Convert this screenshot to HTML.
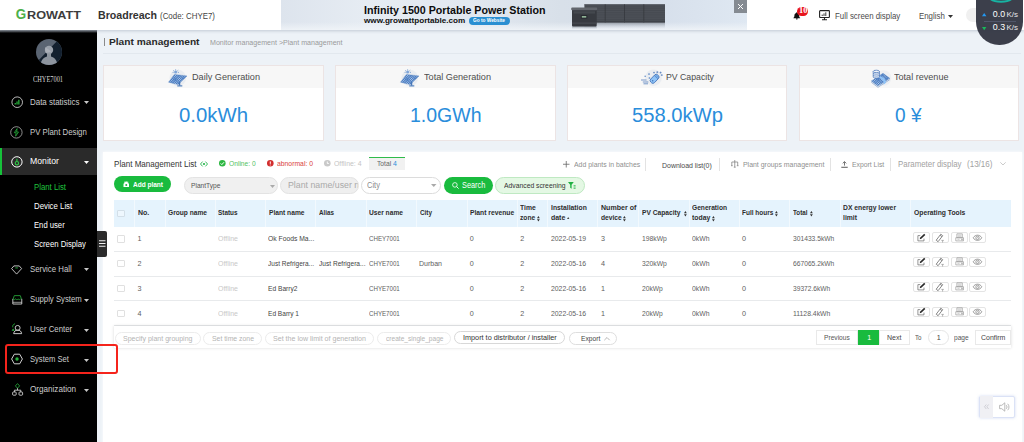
<!DOCTYPE html>
<html lang="en"><head><meta charset="utf-8"><title>Plant management</title>
<style>
html,body{margin:0;padding:0}
body{width:1024px;height:442px;overflow:hidden;position:relative;background:#fff;font-family:"Liberation Sans",sans-serif;}
#root{position:absolute;left:0;top:0;width:1024px;height:442px;overflow:hidden;background:#fff}
#root div{position:absolute;box-sizing:border-box}
#root svg{position:absolute;overflow:visible}
#root span.t{position:absolute;white-space:nowrap;transform-origin:0 50%;display:block}
#root span.s{font-family:"Liberation Sans",sans-serif}
#root span.r{font-family:"Liberation Serif",serif}
</style></head><body><div id="root">
<div style="left:97px;top:29px;width:927px;height:413px;background:#edf2f7;"></div>
<div style="left:103px;top:53px;width:918px;height:1px;background:#e2e8ee;"></div>
<div style="left:0px;top:0px;width:1024px;height:29.5px;background:#fff;box-shadow:0 1px 3px rgba(40,60,90,.22);z-index:3;"></div>
<div style="left:0px;top:29.5px;width:97.3px;height:412.5px;background:#000;z-index:2;"></div>
<div style="left:0px;top:29.5px;width:97.3px;height:3.5px;background:linear-gradient(#9aa0a6,#000);z-index:2;"></div>
<svg style="left:15px;top:6px;z-index:5" width="68" height="15" viewBox="0 0 68 15"><text x="0.800" y="12.600" font-family="Liberation Sans" font-weight="700" font-size="14.600" fill="#4cb04a" textLength="10.400" lengthAdjust="spacingAndGlyphs">G</text><text x="12" y="12.500" font-family="Liberation Sans" font-weight="700" font-size="10.400" fill="#3d3d3d" textLength="54" lengthAdjust="spacingAndGlyphs">ROWATT</text></svg>
<div style="left:281px;top:0px;width:465.5px;height:29.5px;background:linear-gradient(90deg,#dde4ed 0%,#e6ecf3 18%,#e2e8f0 40%,#d8e0e9 60%,#d5deea 78%,#dfe8f2 100%);z-index:4;"></div>
<div style="left:281px;top:22px;width:465.5px;height:7.5px;background:linear-gradient(rgba(255,255,255,0),rgba(240,244,248,.9));z-index:4;"></div>
<div style="left:468.8px;top:17px;width:40.8px;height:7.6px;background:#2a8fd2;border-radius:4px;z-index:5;"></div>
<svg style="left:570px;top:2px;z-index:5" width="100" height="28" viewBox="0 0 100 28"><defs><linearGradient id="rf" x1="0" y1="0" x2="0" y2="1"><stop offset="0" stop-color="#7d848d" stop-opacity=".75"/><stop offset="1" stop-color="#c9d1da" stop-opacity="0"/></linearGradient><pattern id="pl" width="4" height="1.800" patternUnits="userSpaceOnUse"><rect width="4" height="1.800" fill="#4c5057"/><rect y="1.300" width="4" height=".5" fill="#41454b"/></pattern></defs><rect x="14.400" y="20.500" width="80.600" height="6.500" fill="url(#rf)"/><rect x="2" y="24.400" width="24.700" height="3" fill="url(#rf)"/><rect x="14.400" y="2.300" width="80.600" height="18.200" fill="url(#pl)"/><rect x="14.400" y="2.300" width="80.600" height=".9" fill="#5d6168"/><rect x="34.800" y="2.300" width=".7" height="18.200" fill="#33363b"/><rect x="54.300" y="2.300" width=".7" height="18.200" fill="#33363b"/><rect x="73.500" y="2.300" width=".7" height="18.200" fill="#33363b"/><rect x="14.400" y="18.800" width="80.600" height="1.700" fill="#3f4349"/><rect x="2" y="6.300" width="24.700" height="18.100" rx=".8" fill="#373a40"/><rect x="1.200" y="5.600" width="26" height="2.600" rx="1" fill="#62666d"/><rect x="3.500" y="9.200" width="21.500" height="2.400" fill="#44484e"/><rect x="10.800" y="13.200" width="6.500" height="3.400" rx=".4" fill="#22252a"/><rect x="11.800" y="14.100" width="4.500" height="1.500" fill="#9ec4a4"/><rect x="2" y="20.600" width="24.700" height="1" fill="#4b4f55"/></svg>
<div style="left:734px;top:0px;width:12.5px;height:12.7px;background:#858b92;z-index:5;"></div>
<svg style="left:737px;top:3px;z-index:6" width="7" height="7" viewBox="0 0 7 7"><path d="M1 1L6 6M6 1L1 6" stroke="#fff" stroke-width="1" fill="none"/></svg>
<svg style="left:792.800px;top:12px;z-index:5" width="8" height="8" viewBox="0 0 9 9"><path d="M4.3 0.3c.5 0 .7.3.7.7 1.4.4 1.9 1.5 1.9 2.8 0 1.4.4 2 1.1 2.6v.5H.5v-.5C1.2 5.800 1.600 5.200 1.600 3.800c0-1.300.5-2.400 1.900-2.800 0-.4.300-.7.800-.7zM3.300 7.400h2c0 .6-.4 1.100-1 1.100s-1-.5-1-1.100z" fill="#111"/></svg>
<div style="left:797.3px;top:6.8px;width:10.7px;height:9.2px;background:#e8141c;border-radius:5px;z-index:6;"></div>
<svg style="left:819px;top:10px;z-index:5" width="11" height="10.5" viewBox="0 0 11 10.5"><rect x=".6" y=".6" width="9.8" height="6.9" rx=".7" fill="none" stroke="#222" stroke-width="1.1"/><path d="M3 9.800h5M5.500 7.600v2.200" stroke="#222" stroke-width="1.1"/><path d="M3.200 6v-1.400M5 6V3.400M6.800 6V2.300" stroke="#222" stroke-width=".9"/></svg>
<svg style="left:947.800px;top:14.600px;z-index:5" width="5" height="3" viewBox="0 0 5 3"><path d="M0 0h5L2.500 3z" fill="#333"/></svg>
<div style="left:966px;top:8px;width:34px;height:14.3px;background:#f0f0f0;border-radius:7px;z-index:5;"></div>
<div style="left:976.3px;top:-30px;width:46.4px;height:74.9px;background:rgba(52,55,68,.96);border-radius:23.200px;z-index:8;"></div>
<svg style="left:990px;top:0px;z-index:9" width="22" height="3" viewBox="0 0 22 3"><path d="M1 -0.500C5 2.400 17 2.400 21 -0.500" fill="none" stroke="#17b3a2" stroke-width="2"/></svg>
<div style="left:983.8px;top:21.1px;width:32.2px;height:0.5px;background:#50566a;z-index:9;"></div>
<svg style="left:982px;top:12.600px;z-index:9" width="4.400" height="3.300" viewBox="0 0 4 3"><path d="M0 3h4L2 0z" fill="#2398f2"/></svg>
<svg style="left:982px;top:27.100px;z-index:9" width="4.400" height="3.300" viewBox="0 0 4 3"><path d="M0 0h4L2 3z" fill="#17b95a"/></svg>
<svg style="left:35.800px;top:39.400px;z-index:4" width="26" height="26" viewBox="0 0 26 26"><defs><clipPath id="av"><circle cx="13" cy="13" r="13"/></clipPath></defs><g clip-path="url(#av)"><rect width="26" height="26" fill="#5a6472"/><path d="M23 0L28 0 28 28 0 28 0 24z" fill="#13202f"/><circle cx="13" cy="11" r="4.200" fill="#9aa1ab"/><path d="M4.500 27c0-5.500 3-8.500 6.500-9.500v-3h4v3c3.500 1 6.500 4 6.500 9.500z" fill="#8d949e"/><path d="M9 8l6.500 4.500L9.500 14z" fill="#b9bec5" opacity=".5"/></g></svg>
<svg style="left:84.100px;top:101.1px;z-index:4" width="5" height="3" viewBox="0 0 5 3"><path d="M0 0h5L2.500 3z" fill="#c8c8c8"/></svg>
<div style="left:0px;top:147.8px;width:97.3px;height:27.5px;background:#2a2a2a;z-index:3;"></div>
<div style="left:0px;top:147.8px;width:2px;height:27.5px;background:#16c23a;z-index:4;"></div>
<svg style="left:84.100px;top:160.8px;z-index:4" width="5" height="3" viewBox="0 0 5 3"><path d="M0 0h5L2.500 3z" fill="#fff"/></svg>
<svg style="left:84.100px;top:268.3px;z-index:4" width="5" height="3" viewBox="0 0 5 3"><path d="M0 0h5L2.500 3z" fill="#c8c8c8"/></svg>
<svg style="left:84.100px;top:298.6px;z-index:4" width="5" height="3" viewBox="0 0 5 3"><path d="M0 0h5L2.500 3z" fill="#c8c8c8"/></svg>
<svg style="left:84.100px;top:328.6px;z-index:4" width="5" height="3" viewBox="0 0 5 3"><path d="M0 0h5L2.500 3z" fill="#c8c8c8"/></svg>
<svg style="left:84.100px;top:358.6px;z-index:4" width="5" height="3" viewBox="0 0 5 3"><path d="M0 0h5L2.500 3z" fill="#c8c8c8"/></svg>
<svg style="left:84.100px;top:388.8px;z-index:4" width="5" height="3" viewBox="0 0 5 3"><path d="M0 0h5L2.500 3z" fill="#c8c8c8"/></svg>
<svg style="left:11px;top:96px;z-index:4" width="12.4" height="12.4" viewBox="0 0 12.4 12.4"><circle cx="6.200" cy="6.200" r="5.300" fill="none" stroke="#e6e6e6" stroke-width=".8"/><path d="M3.600 8.600h1.300v-1.600h-1.300zM5.400 8.600h1.300V5.500h-1.300zM7.200 8.600h1.300V3.800h-1.300z" fill="#27b13c"/></svg>
<svg style="left:10.4px;top:125.8px;z-index:4" width="12.8" height="12.8" viewBox="0 0 12.8 12.8"><circle cx="6.400" cy="6.400" r="5.700" fill="none" stroke="#c8c8c8" stroke-width=".7"/><path d="M7.100 2.600L4.300 6.700h1.900L5.600 10.200 8.500 6h-1.900z" fill="none" stroke="#27b13c" stroke-width=".8" stroke-linejoin="round"/></svg>
<svg style="left:11.3px;top:156.3px;z-index:4" width="11.8" height="11.8" viewBox="0 0 11.8 11.8"><circle cx="5.900" cy="5.900" r="5.200" fill="none" stroke="#fff" stroke-width="1"/><circle cx="5.900" cy="7.200" r="1.700" fill="none" stroke="#2fc045" stroke-width="1.200"/><path d="M5.900 5.500V2.800" stroke="#2fc045" stroke-width="1.200"/></svg>
<svg style="left:11.3px;top:264.6px;z-index:4" width="11.2" height="10" viewBox="0 0 12 11"><path d="M3 1h6l2.500 3L6 10 .5 4z" fill="none" stroke="#e6e6e6" stroke-width=".9" stroke-linejoin="round"/><path d="M4.600 3.200h2.800" stroke="#27b13c" stroke-width="1"/></svg>
<svg style="left:11.7px;top:295px;z-index:4" width="10.6" height="9.6" viewBox="0 0 11 10.500"><path d="M.6 4.200V9.900h9.800V4.200" fill="none" stroke="#e6e6e6" stroke-width=".9"/><path d="M.6 8h9.800" stroke="#e6e6e6" stroke-width=".7"/><path d="M1 4.300L2.200.7h6.600L10 4.300M1 4.300c.8 1 1.800 1 2.600 0 .8 1 2 1 2.800 0 .8 1 2 1 2.800 0" fill="none" stroke="#27b13c" stroke-width=".9" stroke-linejoin="round"/></svg>
<svg style="left:11.3px;top:323px;z-index:4" width="11.4" height="11.4" viewBox="0 0 12 12"><circle cx="7" cy="5.200" r="2.600" fill="none" stroke="#e6e6e6" stroke-width=".9"/><path d="M2.800 11.200c.3-2.600 2-3.700 4.200-3.700s3.900 1.100 4.200 3.700z" fill="none" stroke="#e6e6e6" stroke-width=".9" stroke-linejoin="round"/><path d="M4.200.8C2.400 1.200 1.400 2.800 1.900 4.600M1.200 7.800l1.200-1.600.8 1.600z" fill="none" stroke="#27b13c" stroke-width=".9"/></svg>
<svg style="left:11px;top:353.4px;z-index:4" width="12" height="12" viewBox="0 0 12 12"><path d="M3.300 1.200h5.400L11.400 6 8.700 10.800H3.300L.6 6z" fill="none" stroke="#e6e6e6" stroke-width=".9" stroke-linejoin="round"/><circle cx="6" cy="6" r="1.700" fill="#27b13c"/></svg>
<svg style="left:11.5px;top:383px;z-index:4" width="12" height="13" viewBox="0 0 12 13"><path d="M5.500.6L7.600 2.900 5.500 5.200 3.400 2.900z" fill="none" stroke="#27b13c" stroke-width=".8"/><path d="M5.500 5.200v2M2.400 9V7.200h6.400V9" fill="none" stroke="#e6e6e6" stroke-width=".8"/><rect x=".6" y="9" width="3.600" height="3.200" rx=".8" fill="none" stroke="#e6e6e6" stroke-width=".8"/><rect x="7" y="9" width="3.600" height="3.200" rx=".8" fill="none" stroke="#e6e6e6" stroke-width=".8"/></svg>
<div style="left:97px;top:230.5px;width:9.8px;height:26px;background:#2b2b2b;border-radius:0 2px 2px 0;z-index:6;"></div>
<svg style="left:99.300px;top:240.300px;z-index:7" width="6.500" height="7" viewBox="0 0 6.500 7"><path d="M0 .8h6.500M0 3.500h6.500M0 6.200h6.500" stroke="#f0f0f0" stroke-width="1.100"/></svg>
<div style="left:4.5px;top:344.3px;width:113.2px;height:29.6px;border:2px solid #f5241c;border-radius:3px;z-index:9;"></div>
<div style="left:104.4px;top:38.3px;width:0.8px;height:8px;background:#8a8a8a;"></div>
<svg width="0" height="0" style="left:0;top:0"><defs><pattern id="ht" width="1.600" height="1.600" patternUnits="userSpaceOnUse" patternTransform="rotate(38)"><rect width="1.600" height="1.600" fill="#4b7dc2"/><rect x="0" y="0" width=".75" height=".75" fill="#cfe0f5"/></pattern></defs></svg>
<div style="left:103.3px;top:65px;width:220.3px;height:76px;background:#fff;border:1px solid #ece4e4;"></div>
<div style="left:104.3px;top:66px;width:218.3px;height:22px;background:#f7f7f7;"></div>
<svg style="left:168px;top:68.500px" width="20" height="18" viewBox="0 0 20 18"><circle cx="9.800" cy="9" r="8.300" fill="#e6e9ef" opacity=".75"/><path d="M.5 13.200L6.300 5.500 19 6.900 10.200 15.600z" fill="url(#ht)"/><path d="M.5 13.200L6.300 5.500 19 6.900 10.200 15.600z" fill="none" stroke="#4576b8" stroke-width=".5" opacity=".7"/><circle cx="7.600" cy="3" r="1.500" fill="#7fa5d8"/><path d="M7.600 .3v1M5 1.200l.8.700M10.200 1.200l-.8.700M4.600 3.400h1M9.800 3.400h1.200" stroke="#4b7dc2" stroke-width=".6"/><path d="M11.600 13v3.600" stroke="#4576b8" stroke-width="1.300"/><path d="M9.300 16.900h5" stroke="#4576b8" stroke-width="1.100"/></svg>
<div style="left:335.3px;top:65px;width:220.4px;height:76px;background:#fff;border:1px solid #ece4e4;"></div>
<div style="left:336.3px;top:66px;width:218.4px;height:22px;background:#f7f7f7;"></div>
<svg style="left:400px;top:68.500px" width="20" height="18" viewBox="0 0 20 18"><circle cx="9.800" cy="9" r="8.300" fill="#e6e9ef" opacity=".75"/><path d="M.5 13.200L6.300 5.500 19 6.900 10.200 15.600z" fill="url(#ht)"/><path d="M.5 13.200L6.300 5.500 19 6.900 10.200 15.600z" fill="none" stroke="#4576b8" stroke-width=".5" opacity=".7"/><circle cx="7.600" cy="3" r="1.500" fill="#7fa5d8"/><path d="M7.600 .3v1M5 1.200l.8.700M10.200 1.200l-.8.700M4.600 3.400h1M9.800 3.400h1.200" stroke="#4b7dc2" stroke-width=".6"/><path d="M11.600 13v3.600" stroke="#4576b8" stroke-width="1.300"/><path d="M9.300 16.900h5" stroke="#4576b8" stroke-width="1.100"/></svg>
<div style="left:567.3px;top:65px;width:220.2px;height:76px;background:#fff;border:1px solid #ece4e4;"></div>
<div style="left:568.3px;top:66px;width:218.2px;height:22px;background:#f7f7f7;"></div>
<svg style="left:641px;top:68.500px" width="22" height="18" viewBox="0 0 22 18"><circle cx="12.500" cy="8.700" r="8.300" fill="#e6e9ef" opacity=".75"/><g transform="rotate(-46 13.600 9.800)"><rect x="8.600" y="7.200" width="10" height="5.200" rx="2.200" fill="#8fc4f8" stroke="#3f6fb5" stroke-width=".8"/><path d="M15.800 7.400v4.800M17 7.600v4.400" stroke="#3f6fb5" stroke-width=".6"/><circle cx="10.900" cy="9.800" r=".7" fill="#3f6fb5"/></g><path d="M16.300 2.200v2M15.300 3.200h2M19.600 2.600v2M18.600 3.600h2M20.800 5.200v1.800M19.900 6.100h1.800M13 2.800v1.600M12.200 3.600h1.600" stroke="#3f6fb5" stroke-width=".6"/><path d="M0 11h5.500M1.800 13h5.500M2.500 14.800h4.500" stroke="#3f6fb5" stroke-width=".7"/><path d="M4.200 6.600v1.400M3.500 7.300h1.400M8 4.200v1.800M7.100 5.100h1.800M8.400 8.200v1.600M7.600 9h1.600" stroke="#4b7dc2" stroke-width=".6"/></svg>
<div style="left:799px;top:65px;width:220.3px;height:76px;background:#fff;border:1px solid #ece4e4;"></div>
<div style="left:800px;top:66px;width:218.3px;height:22px;background:#f7f7f7;"></div>
<svg style="left:871px;top:68.500px" width="20" height="18" viewBox="0 0 20 18"><circle cx="12.500" cy="9" r="7.800" fill="#e6e9ef" opacity=".6"/><path d="M.3 12L12 4.300l6.800 5-11.800 7.700z" fill="url(#ht)"/><path d="M.3 12L12 4.300l6.800 5-11.800 7.700z" fill="none" stroke="#4576b8" stroke-width=".5" opacity=".7"/><path d="M.3 13.300l6.700 5 11.800-7.700" fill="none" stroke="#4576b8" stroke-width=".6" opacity=".8"/><path d="M5.600 8.300c2.500 0 5.600 1.400 7.100 4.600v2.500l2-1.400v-2.300C13.200 8.500 10 7 7.500 7z" fill="#8fc4f8"/><path d="M2.200 2.400v5.800c.6 1.200 5.600 1.200 6.200 0V2.400" fill="#e9eff8" stroke="#3f6fb5" stroke-width=".7"/><ellipse cx="5.300" cy="2.400" rx="3.100" ry="1.200" fill="#f2f6fb" stroke="#3f6fb5" stroke-width=".7"/><path d="M2.200 4.300c.6 1.200 5.600 1.200 6.200 0M2.200 6.200c.6 1.200 5.600 1.200 6.200 0" fill="none" stroke="#3f6fb5" stroke-width=".6"/></svg>
<div style="left:103px;top:152.2px;width:918.5px;height:297.8px;background:#fff;box-shadow:0 0 3px rgba(255,255,255,.9);"></div>
<svg style="left:199.500px;top:160.600px" width="8" height="6" viewBox="0 0 8 6"><path d="M2.600.6L.5 3l2.100 2.400M5.400.6L7.500 3 5.400 5.400" fill="none" stroke="#23b24a" stroke-width=".9"/><circle cx="4" cy="3" r="1.100" fill="#23b24a"/></svg>
<svg style="left:218.800px;top:160.300px" width="6.600" height="6.600" viewBox="0 0 10 10"><circle cx="5" cy="5" r="5" fill="#2db742"/><path d="M2.500 5.200l1.800 1.800 3.300-3.600" fill="none" stroke="#fff" stroke-width="1.500"/></svg>
<svg style="left:266.800px;top:160.300px" width="6.600" height="6.600" viewBox="0 0 10 10"><circle cx="5" cy="5" r="5" fill="#d22e2e"/><path d="M5 2.200v3.600M5 7v1.200" stroke="#fff" stroke-width="1.500"/></svg>
<svg style="left:324px;top:160.300px" width="6.600" height="6.600" viewBox="0 0 10 10"><circle cx="5" cy="5" r="5" fill="#c9c9c9"/><path d="M5 2.300V5.300h2.300" fill="none" stroke="#fff" stroke-width="1.400"/></svg>
<div style="left:368.5px;top:156.8px;width:36.3px;height:13.2px;background:#f1f1f1;border-top:1px solid #2fbb4a;"></div>
<svg style="left:563px;top:161px" width="6.500" height="6.500" viewBox="0 0 6.500 6.500"><path d="M3.250 0v6.500M0 3.250h6.500" stroke="#666" stroke-width=".8"/></svg>
<div style="left:645px;top:157.5px;width:0.6px;height:13.5px;background:#e3e3e3;"></div>
<div style="left:719.3px;top:157.5px;width:0.6px;height:13.5px;background:#e3e3e3;"></div>
<svg style="left:731px;top:160.300px" width="7.500" height="7.500" viewBox="0 0 7.500 7.500"><path d="M3.750 0v7.200M.8 2h5.900M.8 2v3.600M6.700 2v3.600M0 5.700h1.700M5.800 5.700h1.700M2.800 7.200h1.900" fill="none" stroke="#777" stroke-width=".7"/></svg>
<div style="left:829.6px;top:157.5px;width:0.6px;height:13.5px;background:#e3e3e3;"></div>
<svg style="left:841px;top:160.800px" width="7" height="7" viewBox="0 0 7 7"><path d="M3.500 4.600V.7M1.700 2.400L3.500.6l1.800 1.800" fill="none" stroke="#666" stroke-width=".9"/><path d="M.3 6.300h6.400" stroke="#666" stroke-width="1.100"/></svg>
<div style="left:889.8px;top:157.5px;width:0.6px;height:13.5px;background:#e3e3e3;"></div>
<svg style="left:1000px;top:162px" width="6" height="3.500" viewBox="0 0 6 3.500"><path d="M.3.300L3 3l2.700-2.700" fill="none" stroke="#b5b5b5" stroke-width=".7"/></svg>
<div style="left:113.9px;top:176.4px;width:57.6px;height:15.9px;background:#19bb3e;border-radius:9px;"></div>
<svg style="left:122.800px;top:181.300px" width="6.500" height="6.500" viewBox="0 0 6.500 6.500"><path d="M.5 2.800L3.250.5 6 2.800V6H.5z" fill="#fff"/><circle cx="3.250" cy="3.900" r="1" fill="#19bb3e"/><path d="M1.200 1.200h4.100" stroke="#fff" stroke-width="1"/></svg>
<div style="left:183.5px;top:177px;width:94.7px;height:17px;background:#f0f0f0;border:1px solid #e3e3e3;border-radius:9px;"></div>
<svg style="left:269.500px;top:184.600px" width="5" height="3" viewBox="0 0 5 3"><path d="M0 0h5L2.500 3z" fill="#aaa"/></svg>
<div style="left:280.2px;top:177px;width:78.6px;height:16.6px;background:#efefef;border:1px solid #e3e3e3;border-radius:9px;overflow:hidden;"></div>
<div style="left:360.5px;top:177px;width:80.9px;height:16.7px;background:#fff;border:1px solid #dcdcdc;border-radius:9px;"></div>
<svg style="left:430.500px;top:184.300px" width="5.500" height="3" viewBox="0 0 5.500 3"><path d="M0 0h5.500L2.750 3z" fill="#aaa"/></svg>
<div style="left:444px;top:177px;width:48.9px;height:17px;background:#19bb3e;border-radius:9px;"></div>
<svg style="left:452px;top:181.800px" width="7" height="7" viewBox="0 0 7 7"><circle cx="2.900" cy="2.900" r="2.300" fill="none" stroke="#fff" stroke-width=".8"/><path d="M4.600 4.600l2 2" stroke="#fff" stroke-width=".9"/></svg>
<div style="left:494.7px;top:176.6px;width:90px;height:17.4px;background:#e4f8e4;border:1px solid #bfe9c2;border-radius:9px;"></div>
<svg style="left:568.200px;top:182px" width="8" height="7" viewBox="0 0 8 7"><path d="M0 0h5.800L3.600 2.800V6.800L2.200 5.800V2.800z" fill="#1fb142"/><path d="M5.600 3.600h2M5.600 5h2M5.600 6.400h2" stroke="#1fb142" stroke-width=".7"/></svg>
<div style="left:114px;top:200px;width:897px;height:26.7px;background:#e5f3fd;"></div>
<div style="left:134px;top:200px;width:0.6px;height:26.7px;background:#f2f9fe;"></div>
<div style="left:164.5px;top:200px;width:0.6px;height:26.7px;background:#f2f9fe;"></div>
<div style="left:214.7px;top:200px;width:0.6px;height:26.7px;background:#f2f9fe;"></div>
<div style="left:265.2px;top:200px;width:0.6px;height:26.7px;background:#f2f9fe;"></div>
<div style="left:315.2px;top:200px;width:0.6px;height:26.7px;background:#f2f9fe;"></div>
<div style="left:365.7px;top:200px;width:0.6px;height:26.7px;background:#f2f9fe;"></div>
<div style="left:416.2px;top:200px;width:0.6px;height:26.7px;background:#f2f9fe;"></div>
<div style="left:466.5px;top:200px;width:0.6px;height:26.7px;background:#f2f9fe;"></div>
<div style="left:517.2px;top:200px;width:0.6px;height:26.7px;background:#f2f9fe;"></div>
<div style="left:547.2px;top:200px;width:0.6px;height:26.7px;background:#f2f9fe;"></div>
<div style="left:597.2px;top:200px;width:0.6px;height:26.7px;background:#f2f9fe;"></div>
<div style="left:638.2px;top:200px;width:0.6px;height:26.7px;background:#f2f9fe;"></div>
<div style="left:688.5px;top:200px;width:0.6px;height:26.7px;background:#f2f9fe;"></div>
<div style="left:738.7px;top:200px;width:0.6px;height:26.7px;background:#f2f9fe;"></div>
<div style="left:789.3px;top:200px;width:0.6px;height:26.7px;background:#f2f9fe;"></div>
<div style="left:839.5px;top:200px;width:0.6px;height:26.7px;background:#f2f9fe;"></div>
<div style="left:910.2px;top:200px;width:0.6px;height:26.7px;background:#f2f9fe;"></div>
<div style="left:114px;top:250.6px;width:897px;height:0.8px;background:#e8eaec;"></div>
<div style="left:114px;top:275.6px;width:897px;height:0.8px;background:#e8eaec;"></div>
<div style="left:114px;top:300.4px;width:897px;height:0.8px;background:#e8eaec;"></div>
<div style="left:114px;top:325.1px;width:897px;height:0.8px;background:#e8eaec;"></div>
<div style="left:117px;top:209.9px;width:7.6px;height:7.6px;background:#eef7fe;border:1px solid #d3dfe8;border-radius:1px;"></div>
<svg style="left:537.1px;top:215.8px" width="2.800" height="5.400" viewBox="0 0 2.400 4.600"><path d="M0 1.900h2.400L1.200 0zM0 2.700h2.400L1.200 4.600z" fill="#333"/></svg>
<svg style="left:566.6px;top:216.7px" width="2.400" height="2.200" viewBox="0 0 2.400 2.200"><path d="M0 2h2.400L1.200 0z" fill="#444"/></svg>
<svg style="left:623.3px;top:215.8px" width="2.800" height="5.400" viewBox="0 0 2.400 4.600"><path d="M0 1.900h2.400L1.200 0zM0 2.700h2.400L1.200 4.600z" fill="#333"/></svg>
<svg style="left:683.6px;top:210.5px" width="2.800" height="5.400" viewBox="0 0 2.400 4.600"><path d="M0 1.900h2.400L1.200 0zM0 2.700h2.400L1.200 4.600z" fill="#333"/></svg>
<svg style="left:711.6px;top:215.8px" width="2.800" height="5.400" viewBox="0 0 2.400 4.600"><path d="M0 1.900h2.400L1.200 0zM0 2.700h2.400L1.200 4.600z" fill="#333"/></svg>
<svg style="left:775.3px;top:210.5px" width="2.800" height="5.400" viewBox="0 0 2.400 4.600"><path d="M0 1.900h2.400L1.200 0zM0 2.700h2.400L1.200 4.600z" fill="#333"/></svg>
<svg style="left:809.6px;top:210.5px" width="2.800" height="5.400" viewBox="0 0 2.400 4.600"><path d="M0 1.900h2.400L1.200 0zM0 2.700h2.400L1.200 4.600z" fill="#333"/></svg>
<div style="left:117px;top:235.3px;width:7.6px;height:7.6px;background:#fff;border:1px solid #e0e0e0;border-radius:1px;"></div>
<div style="left:913.3px;top:232.3px;width:16.9px;height:10.3px;background:#fff;border:1px solid #e4e4e4;border-radius:2px;"></div>
<svg style="left:913.3px;top:231.7px" width="16.800" height="12" viewBox="0 0 16.800 12"><path d="M7.300 3.600H4.900v5.300h6.100V6.600" fill="none" stroke="#666" stroke-width=".7"/><path d="M6.700 7.200l.5-1.700 4-3.700 1.100 1.200-4 3.700z" fill="#2a2a2a"/></svg>
<div style="left:932px;top:232.3px;width:16.9px;height:10.3px;background:#fff;border:1px solid #e4e4e4;border-radius:2px;"></div>
<svg style="left:932px;top:231.7px" width="16.800" height="12" viewBox="0 0 16.800 12"><path d="M4.200 8.200l4.600-6 1.900 1.500-4.600 6z" fill="none" stroke="#555" stroke-width=".7"/><path d="M8 3.200l1.900 1.500" stroke="#555" stroke-width=".6"/><path d="M9.300 8.400h2.600M10.600 8.400v2.200" stroke="#999" stroke-width=".7"/></svg>
<div style="left:950.7px;top:232.3px;width:16.9px;height:10.3px;background:#fff;border:1px solid #e4e4e4;border-radius:2px;"></div>
<svg style="left:950.7px;top:231.7px" width="16.800" height="12" viewBox="0 0 16.800 12"><path d="M5.900 1.800h5.400v3.900H5.900z" fill="none" stroke="#999" stroke-width=".7"/><path d="M4.800 5.700h7.700v3.200H4.800z" fill="none" stroke="#999" stroke-width=".7"/><path d="M6.800 3.100h3.600M6.800 4.300h3.600M6.400 7.300h2.200" stroke="#aaa" stroke-width=".6"/><path d="M10.300 7.300h1.400M11 6.600v1.900" stroke="#888" stroke-width=".6"/></svg>
<div style="left:969.4px;top:232.3px;width:16.9px;height:10.3px;background:#fff;border:1px solid #e4e4e4;border-radius:2px;"></div>
<svg style="left:969.4px;top:231.7px" width="16.800" height="12" viewBox="0 0 16.800 12"><path d="M4.200 5.800c1.900-3.500 6.700-3.500 8.600 0-1.900 3.500-6.700 3.500-8.600 0z" fill="none" stroke="#7a7a7a" stroke-width=".7"/><circle cx="8.500" cy="5.800" r="1.700" fill="none" stroke="#7a7a7a" stroke-width=".7"/><path d="M8.500 5v.9h.8" fill="none" stroke="#888" stroke-width=".5"/></svg>
<div style="left:117px;top:259.9px;width:7.6px;height:7.6px;background:#fff;border:1px solid #e0e0e0;border-radius:1px;"></div>
<div style="left:913.3px;top:256.9px;width:16.9px;height:10.3px;background:#fff;border:1px solid #e4e4e4;border-radius:2px;"></div>
<svg style="left:913.3px;top:256.3px" width="16.800" height="12" viewBox="0 0 16.800 12"><path d="M7.300 3.600H4.900v5.300h6.100V6.600" fill="none" stroke="#666" stroke-width=".7"/><path d="M6.700 7.200l.5-1.700 4-3.700 1.100 1.200-4 3.700z" fill="#2a2a2a"/></svg>
<div style="left:932px;top:256.9px;width:16.9px;height:10.3px;background:#fff;border:1px solid #e4e4e4;border-radius:2px;"></div>
<svg style="left:932px;top:256.3px" width="16.800" height="12" viewBox="0 0 16.800 12"><path d="M4.200 8.200l4.600-6 1.900 1.500-4.600 6z" fill="none" stroke="#555" stroke-width=".7"/><path d="M8 3.200l1.900 1.500" stroke="#555" stroke-width=".6"/><path d="M9.300 8.400h2.600M10.600 8.400v2.200" stroke="#999" stroke-width=".7"/></svg>
<div style="left:950.7px;top:256.9px;width:16.9px;height:10.3px;background:#fff;border:1px solid #e4e4e4;border-radius:2px;"></div>
<svg style="left:950.7px;top:256.3px" width="16.800" height="12" viewBox="0 0 16.800 12"><path d="M5.900 1.800h5.400v3.900H5.900z" fill="none" stroke="#999" stroke-width=".7"/><path d="M4.800 5.700h7.700v3.200H4.800z" fill="none" stroke="#999" stroke-width=".7"/><path d="M6.800 3.100h3.600M6.800 4.300h3.600M6.400 7.300h2.200" stroke="#aaa" stroke-width=".6"/><path d="M10.300 7.300h1.400M11 6.600v1.900" stroke="#888" stroke-width=".6"/></svg>
<div style="left:969.4px;top:256.9px;width:16.9px;height:10.3px;background:#fff;border:1px solid #e4e4e4;border-radius:2px;"></div>
<svg style="left:969.4px;top:256.3px" width="16.800" height="12" viewBox="0 0 16.800 12"><path d="M4.200 5.800c1.900-3.500 6.700-3.500 8.600 0-1.900 3.500-6.700 3.500-8.600 0z" fill="none" stroke="#7a7a7a" stroke-width=".7"/><circle cx="8.500" cy="5.800" r="1.700" fill="none" stroke="#7a7a7a" stroke-width=".7"/><path d="M8.500 5v.9h.8" fill="none" stroke="#888" stroke-width=".5"/></svg>
<div style="left:117px;top:284.8px;width:7.6px;height:7.6px;background:#fff;border:1px solid #e0e0e0;border-radius:1px;"></div>
<div style="left:913.3px;top:281.8px;width:16.9px;height:10.3px;background:#fff;border:1px solid #e4e4e4;border-radius:2px;"></div>
<svg style="left:913.3px;top:281.2px" width="16.800" height="12" viewBox="0 0 16.800 12"><path d="M7.300 3.600H4.900v5.300h6.100V6.600" fill="none" stroke="#666" stroke-width=".7"/><path d="M6.700 7.200l.5-1.700 4-3.700 1.100 1.200-4 3.700z" fill="#2a2a2a"/></svg>
<div style="left:932px;top:281.8px;width:16.9px;height:10.3px;background:#fff;border:1px solid #e4e4e4;border-radius:2px;"></div>
<svg style="left:932px;top:281.2px" width="16.800" height="12" viewBox="0 0 16.800 12"><path d="M4.200 8.200l4.600-6 1.900 1.500-4.600 6z" fill="none" stroke="#555" stroke-width=".7"/><path d="M8 3.200l1.900 1.500" stroke="#555" stroke-width=".6"/><path d="M9.300 8.400h2.600M10.600 8.400v2.200" stroke="#999" stroke-width=".7"/></svg>
<div style="left:950.7px;top:281.8px;width:16.9px;height:10.3px;background:#fff;border:1px solid #e4e4e4;border-radius:2px;"></div>
<svg style="left:950.7px;top:281.2px" width="16.800" height="12" viewBox="0 0 16.800 12"><path d="M5.900 1.800h5.400v3.900H5.900z" fill="none" stroke="#999" stroke-width=".7"/><path d="M4.800 5.700h7.700v3.200H4.800z" fill="none" stroke="#999" stroke-width=".7"/><path d="M6.800 3.100h3.600M6.800 4.300h3.600M6.400 7.300h2.200" stroke="#aaa" stroke-width=".6"/><path d="M10.300 7.300h1.400M11 6.600v1.900" stroke="#888" stroke-width=".6"/></svg>
<div style="left:969.4px;top:281.8px;width:16.9px;height:10.3px;background:#fff;border:1px solid #e4e4e4;border-radius:2px;"></div>
<svg style="left:969.4px;top:281.2px" width="16.800" height="12" viewBox="0 0 16.800 12"><path d="M4.200 5.800c1.900-3.500 6.700-3.500 8.600 0-1.900 3.500-6.700 3.500-8.600 0z" fill="none" stroke="#7a7a7a" stroke-width=".7"/><circle cx="8.500" cy="5.800" r="1.700" fill="none" stroke="#7a7a7a" stroke-width=".7"/><path d="M8.500 5v.9h.8" fill="none" stroke="#888" stroke-width=".5"/></svg>
<div style="left:117px;top:309.7px;width:7.6px;height:7.6px;background:#fff;border:1px solid #e0e0e0;border-radius:1px;"></div>
<div style="left:913.3px;top:306.7px;width:16.9px;height:10.3px;background:#fff;border:1px solid #e4e4e4;border-radius:2px;"></div>
<svg style="left:913.3px;top:306.1px" width="16.800" height="12" viewBox="0 0 16.800 12"><path d="M7.300 3.600H4.900v5.300h6.100V6.600" fill="none" stroke="#666" stroke-width=".7"/><path d="M6.700 7.200l.5-1.700 4-3.700 1.100 1.200-4 3.700z" fill="#2a2a2a"/></svg>
<div style="left:932px;top:306.7px;width:16.9px;height:10.3px;background:#fff;border:1px solid #e4e4e4;border-radius:2px;"></div>
<svg style="left:932px;top:306.1px" width="16.800" height="12" viewBox="0 0 16.800 12"><path d="M4.200 8.200l4.600-6 1.900 1.500-4.600 6z" fill="none" stroke="#555" stroke-width=".7"/><path d="M8 3.200l1.900 1.500" stroke="#555" stroke-width=".6"/><path d="M9.300 8.400h2.600M10.600 8.400v2.200" stroke="#999" stroke-width=".7"/></svg>
<div style="left:950.7px;top:306.7px;width:16.9px;height:10.3px;background:#fff;border:1px solid #e4e4e4;border-radius:2px;"></div>
<svg style="left:950.7px;top:306.1px" width="16.800" height="12" viewBox="0 0 16.800 12"><path d="M5.900 1.800h5.400v3.900H5.900z" fill="none" stroke="#999" stroke-width=".7"/><path d="M4.800 5.700h7.700v3.200H4.800z" fill="none" stroke="#999" stroke-width=".7"/><path d="M6.800 3.100h3.600M6.800 4.300h3.600M6.400 7.300h2.200" stroke="#aaa" stroke-width=".6"/><path d="M10.300 7.300h1.400M11 6.600v1.900" stroke="#888" stroke-width=".6"/></svg>
<div style="left:969.4px;top:306.7px;width:16.9px;height:10.3px;background:#fff;border:1px solid #e4e4e4;border-radius:2px;"></div>
<svg style="left:969.4px;top:306.1px" width="16.800" height="12" viewBox="0 0 16.800 12"><path d="M4.200 5.800c1.900-3.500 6.700-3.500 8.600 0-1.900 3.500-6.700 3.500-8.600 0z" fill="none" stroke="#7a7a7a" stroke-width=".7"/><circle cx="8.500" cy="5.800" r="1.700" fill="none" stroke="#7a7a7a" stroke-width=".7"/><path d="M8.500 5v.9h.8" fill="none" stroke="#888" stroke-width=".5"/></svg>
<div style="left:114px;top:325.6px;width:897px;height:22.6px;background:#fff;box-shadow:0 0 3px rgba(0,0,0,.15);"></div>
<div style="left:114.5px;top:331.8px;width:86.3px;height:13.2px;background:#fff;border:1px solid #ececec;border-radius:7px;"></div>
<div style="left:203.3px;top:331.8px;width:58.7px;height:13.2px;background:#fff;border:1px solid #ececec;border-radius:7px;"></div>
<div style="left:264.5px;top:331.8px;width:109.5px;height:13.2px;background:#fff;border:1px solid #ececec;border-radius:7px;"></div>
<div style="left:377.3px;top:331.8px;width:74.2px;height:13.2px;background:#fff;border:1px solid #ececec;border-radius:7px;"></div>
<div style="left:453.5px;top:330.5px;width:111.3px;height:13.3px;background:#fff;border:1px solid #d8d8d8;border-radius:7px;"></div>
<div style="left:569.3px;top:331.8px;width:48.2px;height:13.2px;background:#fff;border:1px solid #dedede;border-radius:7px;"></div>
<svg style="left:604px;top:336.800px" width="6" height="3.500" viewBox="0 0 6 3.500"><path d="M.3 3.200L3 .5l2.700 2.700" fill="none" stroke="#999" stroke-width=".7"/></svg>
<div style="left:815.5px;top:329.5px;width:42.8px;height:15.8px;background:#fff;border:1px solid #e9e9e9;"></div>
<div style="left:858px;top:329.5px;width:21.2px;height:15.8px;background:#19bb3e;"></div>
<div style="left:879px;top:329.5px;width:30.8px;height:15.8px;background:#fff;border:1px solid #e9e9e9;"></div>
<div style="left:927.6px;top:329.8px;width:21.4px;height:15.2px;background:#fff;border:1px solid #e6e6e6;border-radius:8px;"></div>
<div style="left:975px;top:329.5px;width:36px;height:15.8px;background:#fff;border:1px solid #e9e9e9;"></div>
<div style="left:979px;top:395.7px;width:35.5px;height:22.6px;background:#fff;border:.8px solid #dbe2f6;border-radius:2px;box-shadow:0 0 3px rgba(180,195,235,.6);"></div>
<div style="left:979.8px;top:396.4px;width:13.2px;height:21.2px;background:#f0f0f4;"></div>
<svg style="left:983.800px;top:404.200px" width="5" height="5.500" viewBox="0 0 5 5.500"><path d="M2.300.5L.5 2.750 2.300 5M4.600.5L2.800 2.750 4.600 5" fill="none" stroke="#c2c2c8" stroke-width=".7"/></svg>
<svg style="left:998.500px;top:401.800px" width="11" height="10" viewBox="0 0 11 10"><path d="M.6 3.300h2.200L5.800.8v8.400L2.800 6.700H.6z" fill="none" stroke="#a8a8a8" stroke-width=".8" stroke-linejoin="round"/><path d="M7.300 3.200c.9 1 .9 2.600 0 3.600M8.700 1.800c1.700 1.800 1.700 4.600 0 6.400" fill="none" stroke="#a8a8a8" stroke-width=".8"/></svg>
<span class="t s" style="left:98px;top:9.7px;font-size:11.2px;line-height:11.2px;color:#333;font-weight:700;transform:scaleX(0.949);z-index:5;">Broadreach</span>
<span class="t s" style="left:160px;top:11.5px;font-size:8.6px;line-height:8.6px;color:#444;transform:scaleX(0.921);z-index:5;">(Code: CHYE7)</span>
<span class="t s" style="left:364.3px;top:6.2px;font-size:10.2px;line-height:10.2px;color:#0c0c0c;font-weight:700;transform:scaleX(1.048);z-index:5;">Infinity 1500 Portable Power Station</span>
<span class="t s" style="left:364.3px;top:16.7px;font-size:7.6px;line-height:7.6px;color:#111;font-weight:700;transform:scaleX(1.069);z-index:5;">www.growattportable.com</span>
<span class="t s" style="left:473.3px;top:18.4px;font-size:5px;line-height:5px;color:#fff;font-weight:700;transform:scaleX(0.954);z-index:5;">Go to Website</span>
<span class="t r" style="left:798.6px;top:7.4px;font-size:8.2px;line-height:8.2px;color:#fff;font-weight:700;transform:scaleX(1.026);z-index:7;">10</span>
<span class="t s" style="left:834.5px;top:11.5px;font-size:8.6px;line-height:8.6px;color:#4a4a4a;transform:scaleX(0.917);z-index:5;">Full screen display</span>
<span class="t s" style="left:918.5px;top:11.5px;font-size:8.6px;line-height:8.6px;color:#4a4a4a;transform:scaleX(0.915);z-index:5;">English</span>
<span class="t s" style="left:980px;top:11.5px;font-size:8px;line-height:8px;color:#bbb;transform:scaleX(0.898);z-index:5;">Log</span>
<span class="t s" style="left:992.8px;top:10px;font-size:8.8px;line-height:8.8px;color:#fff;z-index:9;">0.0</span>
<span class="t s" style="left:1006.4px;top:10.6px;font-size:8px;line-height:8px;color:#e6e6ea;z-index:9;">K/s</span>
<span class="t s" style="left:992.8px;top:23.3px;font-size:8.8px;line-height:8.8px;color:#fff;z-index:9;">0.3</span>
<span class="t s" style="left:1006.4px;top:23.9px;font-size:8px;line-height:8px;color:#e6e6ea;z-index:9;">K/s</span>
<span class="t r" style="left:33px;top:75.7px;font-size:7.6px;line-height:7.6px;color:#d8d8d8;transform:scaleX(0.837);z-index:4;">CHYE7001</span>
<span class="t s" style="left:29.5px;top:97.75px;font-size:9.3px;line-height:9.3px;color:#cdcdcd;transform:scaleX(0.855);z-index:4;">Data statistics</span>
<span class="t s" style="left:29.5px;top:127.75px;font-size:9.3px;line-height:9.3px;color:#cdcdcd;transform:scaleX(0.839);z-index:4;">PV Plant Design</span>
<span class="t s" style="left:29.5px;top:157.45px;font-size:9.3px;line-height:9.3px;color:#fff;transform:scaleX(0.935);z-index:4;">Monitor</span>
<span class="t s" style="left:34.3px;top:183.25px;font-size:8.9px;line-height:8.9px;color:#1fc43e;transform:scaleX(0.876);z-index:4;">Plant List</span>
<span class="t s" style="left:34.3px;top:202.25px;font-size:8.9px;line-height:8.9px;color:#fff;transform:scaleX(0.880);z-index:4;">Device List</span>
<span class="t s" style="left:34.3px;top:220.55px;font-size:8.9px;line-height:8.9px;color:#fff;transform:scaleX(0.864);z-index:4;">End user</span>
<span class="t s" style="left:34.3px;top:239.55px;font-size:8.9px;line-height:8.9px;color:#fff;transform:scaleX(0.871);z-index:4;">Screen Display</span>
<span class="t s" style="left:29.5px;top:264.95px;font-size:9.3px;line-height:9.3px;color:#cdcdcd;transform:scaleX(0.843);z-index:4;">Service Hall</span>
<span class="t s" style="left:29.5px;top:295.25px;font-size:9.3px;line-height:9.3px;color:#cdcdcd;transform:scaleX(0.835);z-index:4;">Supply System</span>
<span class="t s" style="left:29.5px;top:325.25px;font-size:9.3px;line-height:9.3px;color:#cdcdcd;transform:scaleX(0.840);z-index:4;">User Center</span>
<span class="t s" style="left:29.5px;top:355.25px;font-size:9.3px;line-height:9.3px;color:#cdcdcd;transform:scaleX(0.818);z-index:4;">System Set</span>
<span class="t s" style="left:29.5px;top:385.45px;font-size:9.3px;line-height:9.3px;color:#cdcdcd;transform:scaleX(0.873);z-index:4;">Organization</span>
<span class="t s" style="left:109px;top:37.4px;font-size:9.8px;line-height:9.8px;color:#2a2a2a;font-weight:700;transform:scaleX(1.039);">Plant management</span>
<span class="t s" style="left:209.5px;top:39.85px;font-size:6.9px;line-height:6.9px;color:#9a9a9a;transform:scaleX(1.028);">Monitor management &gt;Plant management</span>
<span class="t s" style="left:191.5px;top:71.65px;font-size:9.7px;line-height:9.7px;color:#4d4d4d;transform:scaleX(0.942);">Daily Generation</span>
<span class="t s" style="left:179px;top:104.8px;font-size:20px;line-height:20px;color:#2a8ddb;transform:scaleX(1.018);">0.0kWh</span>
<span class="t s" style="left:424px;top:71.65px;font-size:9.7px;line-height:9.7px;color:#4d4d4d;transform:scaleX(0.942);">Total Generation</span>
<span class="t s" style="left:410px;top:104.8px;font-size:20px;line-height:20px;color:#2a8ddb;transform:scaleX(0.975);">1.0GWh</span>
<span class="t s" style="left:665.5px;top:71.65px;font-size:9.7px;line-height:9.7px;color:#4d4d4d;transform:scaleX(0.900);">PV Capacity</span>
<span class="t s" style="left:632px;top:104.8px;font-size:20px;line-height:20px;color:#2a8ddb;transform:scaleX(1.010);">558.0kWp</span>
<span class="t s" style="left:894px;top:71.65px;font-size:9.7px;line-height:9.7px;color:#4d4d4d;transform:scaleX(0.937);">Total revenue</span>
<span class="t s" style="left:894.5px;top:104.8px;font-size:20px;line-height:20px;color:#2a8ddb;transform:scaleX(0.953);">0 ¥</span>
<span class="t s" style="left:114.3px;top:159.5px;font-size:9.2px;line-height:9.2px;color:#333;transform:scaleX(0.878);">Plant Management List</span>
<span class="t s" style="left:229.3px;top:160.1px;font-size:7.2px;line-height:7.2px;color:#52c262;transform:scaleX(0.928);">Online: 0</span>
<span class="t s" style="left:277px;top:160.1px;font-size:7.2px;line-height:7.2px;color:#d9423c;transform:scaleX(0.948);">abnormal: 0</span>
<span class="t s" style="left:334px;top:160.1px;font-size:7.2px;line-height:7.2px;color:#c4c4c4;transform:scaleX(0.960);">Offline: 4</span>
<span class="t s" style="left:376.8px;top:160.05px;font-size:7.3px;line-height:7.3px;color:#666;transform:scaleX(0.921);">Total</span>
<span class="t s" style="left:393px;top:160.05px;font-size:7.3px;line-height:7.3px;color:#2b8edb;transform:scaleX(0.935);">4</span>
<span class="t s" style="left:573.8px;top:160.95px;font-size:7.3px;line-height:7.3px;color:#8f8f8f;transform:scaleX(0.949);">Add plants in batches</span>
<span class="t s" style="left:661.5px;top:162.4px;font-size:7.2px;line-height:7.2px;color:#4a4a4a;transform:scaleX(0.966);">Download list(0)</span>
<span class="t s" style="left:742.5px;top:160.95px;font-size:7.3px;line-height:7.3px;color:#8f8f8f;transform:scaleX(0.950);">Plant groups management</span>
<span class="t s" style="left:852px;top:160.95px;font-size:7.3px;line-height:7.3px;color:#8f8f8f;transform:scaleX(0.934);">Export List</span>
<span class="t s" style="left:897.5px;top:159.65px;font-size:9.3px;line-height:9.3px;color:#a2a2a2;transform:scaleX(0.847);">Parameter display</span>
<span class="t s" style="left:967px;top:159.65px;font-size:9.3px;line-height:9.3px;color:#a2a2a2;transform:scaleX(0.865);">(13/16)</span>
<span class="t s" style="left:133px;top:180.85px;font-size:7.5px;line-height:7.5px;color:#fff;font-weight:700;transform:scaleX(0.868);">Add plant</span>
<span class="t s" style="left:190.5px;top:182.1px;font-size:7.2px;line-height:7.2px;color:#555;transform:scaleX(0.923);">PlantType</span>
<span class="t s" style="left:287.8px;top:180.8px;font-size:9.2px;line-height:9.2px;color:#a9a9a9;transform:scaleX(0.954);clip-path:inset(0 21% 0 0);">Plant name/user name</span>
<span class="t s" style="left:367.3px;top:180.8px;font-size:9.2px;line-height:9.2px;color:#8c8c8c;transform:scaleX(0.821);">City</span>
<span class="t s" style="left:461.5px;top:180.95px;font-size:8.7px;line-height:8.7px;color:#fff;transform:scaleX(0.846);">Search</span>
<span class="t s" style="left:503.5px;top:181.9px;font-size:7.2px;line-height:7.2px;color:#333;transform:scaleX(0.944);">Advanced screening</span>
<span class="t s" style="left:137.5px;top:209.15px;font-size:7.5px;line-height:7.5px;color:#2d2d2d;font-weight:700;transform:scaleX(0.934);">No.</span>
<span class="t s" style="left:168px;top:209.15px;font-size:7.5px;line-height:7.5px;color:#2d2d2d;font-weight:700;transform:scaleX(0.883);">Group name</span>
<span class="t s" style="left:218px;top:209.15px;font-size:7.5px;line-height:7.5px;color:#2d2d2d;font-weight:700;transform:scaleX(0.851);">Status</span>
<span class="t s" style="left:268.8px;top:209.15px;font-size:7.5px;line-height:7.5px;color:#2d2d2d;font-weight:700;transform:scaleX(0.887);">Plant name</span>
<span class="t s" style="left:318.8px;top:209.15px;font-size:7.5px;line-height:7.5px;color:#2d2d2d;font-weight:700;transform:scaleX(0.836);">Alias</span>
<span class="t s" style="left:369px;top:209.15px;font-size:7.5px;line-height:7.5px;color:#2d2d2d;font-weight:700;transform:scaleX(0.886);">User name</span>
<span class="t s" style="left:419.8px;top:209.15px;font-size:7.5px;line-height:7.5px;color:#2d2d2d;font-weight:700;transform:scaleX(0.847);">City</span>
<span class="t s" style="left:469.8px;top:209.15px;font-size:7.5px;line-height:7.5px;color:#2d2d2d;font-weight:700;transform:scaleX(0.899);">Plant revenue</span>
<span class="t s" style="left:520.3px;top:204.05px;font-size:7.5px;line-height:7.5px;color:#2d2d2d;font-weight:700;transform:scaleX(0.904);">Time</span>
<span class="t s" style="left:520.3px;top:214.15px;font-size:7.5px;line-height:7.5px;color:#2d2d2d;font-weight:700;transform:scaleX(0.889);">zone</span>
<span class="t s" style="left:550.5px;top:204.05px;font-size:7.5px;line-height:7.5px;color:#2d2d2d;font-weight:700;transform:scaleX(0.904);">Installation</span>
<span class="t s" style="left:550.5px;top:214.15px;font-size:7.5px;line-height:7.5px;color:#2d2d2d;font-weight:700;transform:scaleX(0.927);">date</span>
<span class="t s" style="left:601px;top:204.05px;font-size:7.5px;line-height:7.5px;color:#2d2d2d;font-weight:700;transform:scaleX(0.941);">Number of</span>
<span class="t s" style="left:601px;top:214.15px;font-size:7.5px;line-height:7.5px;color:#2d2d2d;font-weight:700;transform:scaleX(0.890);">device</span>
<span class="t s" style="left:641.5px;top:209.15px;font-size:7.5px;line-height:7.5px;color:#2d2d2d;font-weight:700;transform:scaleX(0.888);">PV Capacity</span>
<span class="t s" style="left:692px;top:204.05px;font-size:7.5px;line-height:7.5px;color:#2d2d2d;font-weight:700;transform:scaleX(0.884);">Generation</span>
<span class="t s" style="left:692px;top:214.15px;font-size:7.5px;line-height:7.5px;color:#2d2d2d;font-weight:700;transform:scaleX(0.914);">today</span>
<span class="t s" style="left:742px;top:209.15px;font-size:7.5px;line-height:7.5px;color:#2d2d2d;font-weight:700;transform:scaleX(0.863);">Full hours</span>
<span class="t s" style="left:792.5px;top:209.15px;font-size:7.5px;line-height:7.5px;color:#2d2d2d;font-weight:700;transform:scaleX(0.835);">Total</span>
<span class="t s" style="left:843px;top:204.05px;font-size:7.5px;line-height:7.5px;color:#2d2d2d;font-weight:700;transform:scaleX(0.902);">DX energy lower</span>
<span class="t s" style="left:843px;top:214.15px;font-size:7.5px;line-height:7.5px;color:#2d2d2d;font-weight:700;transform:scaleX(0.908);">limit</span>
<span class="t s" style="left:913.5px;top:209.15px;font-size:7.5px;line-height:7.5px;color:#2d2d2d;font-weight:700;transform:scaleX(0.901);">Operating Tools</span>
<span class="t s" style="left:137.5px;top:235.2px;font-size:7.2px;line-height:7.2px;color:#606060;">1</span>
<span class="t s" style="left:218px;top:235.2px;font-size:7.2px;line-height:7.2px;color:#c8c8c8;transform:scaleX(0.968);">Offline</span>
<span class="t s" style="left:268px;top:235.2px;font-size:7.2px;line-height:7.2px;color:#444;transform:scaleX(0.942);">Ok Foods Ma...</span>
<span class="t s" style="left:369px;top:235.2px;font-size:7.2px;line-height:7.2px;color:#606060;transform:scaleX(0.856);">CHEY7001</span>
<span class="t s" style="left:469.8px;top:235.2px;font-size:7.2px;line-height:7.2px;color:#606060;">0</span>
<span class="t s" style="left:520.3px;top:235.2px;font-size:7.2px;line-height:7.2px;color:#606060;">2</span>
<span class="t s" style="left:550.5px;top:235.2px;font-size:7.2px;line-height:7.2px;color:#606060;transform:scaleX(0.952);">2022-05-19</span>
<span class="t s" style="left:601px;top:235.2px;font-size:7.2px;line-height:7.2px;color:#606060;">3</span>
<span class="t s" style="left:641.5px;top:235.2px;font-size:7.2px;line-height:7.2px;color:#606060;transform:scaleX(0.940);">198kWp</span>
<span class="t s" style="left:691.5px;top:235.2px;font-size:7.2px;line-height:7.2px;color:#606060;transform:scaleX(0.952);">0kWh</span>
<span class="t s" style="left:742px;top:235.2px;font-size:7.2px;line-height:7.2px;color:#606060;">0</span>
<span class="t s" style="left:792.5px;top:235.2px;font-size:7.2px;line-height:7.2px;color:#606060;transform:scaleX(0.931);">301433.5kWh</span>
<span class="t s" style="left:137.5px;top:259.8px;font-size:7.2px;line-height:7.2px;color:#606060;">2</span>
<span class="t s" style="left:218px;top:259.8px;font-size:7.2px;line-height:7.2px;color:#c8c8c8;transform:scaleX(0.968);">Offline</span>
<span class="t s" style="left:268px;top:259.8px;font-size:7.2px;line-height:7.2px;color:#444;transform:scaleX(0.907);">Just Refrigera...</span>
<span class="t s" style="left:318.5px;top:259.8px;font-size:7.2px;line-height:7.2px;color:#444;transform:scaleX(0.917);">Just Refrigera...</span>
<span class="t s" style="left:369px;top:259.8px;font-size:7.2px;line-height:7.2px;color:#606060;transform:scaleX(0.856);">CHYE7001</span>
<span class="t s" style="left:419.3px;top:259.8px;font-size:7.2px;line-height:7.2px;color:#606060;transform:scaleX(0.975);">Durban</span>
<span class="t s" style="left:469.8px;top:259.8px;font-size:7.2px;line-height:7.2px;color:#606060;">0</span>
<span class="t s" style="left:520.3px;top:259.8px;font-size:7.2px;line-height:7.2px;color:#606060;">2</span>
<span class="t s" style="left:550.5px;top:259.8px;font-size:7.2px;line-height:7.2px;color:#606060;transform:scaleX(0.952);">2022-05-16</span>
<span class="t s" style="left:601px;top:259.8px;font-size:7.2px;line-height:7.2px;color:#606060;">4</span>
<span class="t s" style="left:641.5px;top:259.8px;font-size:7.2px;line-height:7.2px;color:#606060;transform:scaleX(0.940);">320kWp</span>
<span class="t s" style="left:691.5px;top:259.8px;font-size:7.2px;line-height:7.2px;color:#606060;transform:scaleX(0.952);">0kWh</span>
<span class="t s" style="left:742px;top:259.8px;font-size:7.2px;line-height:7.2px;color:#606060;">0</span>
<span class="t s" style="left:792.5px;top:259.8px;font-size:7.2px;line-height:7.2px;color:#606060;transform:scaleX(0.931);">667065.2kWh</span>
<span class="t s" style="left:137.5px;top:284.7px;font-size:7.2px;line-height:7.2px;color:#606060;">3</span>
<span class="t s" style="left:218px;top:284.7px;font-size:7.2px;line-height:7.2px;color:#c8c8c8;transform:scaleX(0.968);">Offline</span>
<span class="t s" style="left:268px;top:284.7px;font-size:7.2px;line-height:7.2px;color:#444;transform:scaleX(0.923);">Ed Barry2</span>
<span class="t s" style="left:369px;top:284.7px;font-size:7.2px;line-height:7.2px;color:#606060;transform:scaleX(0.856);">CHYE7001</span>
<span class="t s" style="left:469.8px;top:284.7px;font-size:7.2px;line-height:7.2px;color:#606060;">0</span>
<span class="t s" style="left:520.3px;top:284.7px;font-size:7.2px;line-height:7.2px;color:#606060;">2</span>
<span class="t s" style="left:550.5px;top:284.7px;font-size:7.2px;line-height:7.2px;color:#606060;transform:scaleX(0.952);">2022-05-16</span>
<span class="t s" style="left:601px;top:284.7px;font-size:7.2px;line-height:7.2px;color:#606060;">1</span>
<span class="t s" style="left:641.5px;top:284.7px;font-size:7.2px;line-height:7.2px;color:#606060;transform:scaleX(0.930);">20kWp</span>
<span class="t s" style="left:691.5px;top:284.7px;font-size:7.2px;line-height:7.2px;color:#606060;transform:scaleX(0.952);">0kWh</span>
<span class="t s" style="left:742px;top:284.7px;font-size:7.2px;line-height:7.2px;color:#606060;">0</span>
<span class="t s" style="left:792.5px;top:284.7px;font-size:7.2px;line-height:7.2px;color:#606060;transform:scaleX(0.924);">39372.6kWh</span>
<span class="t s" style="left:137.5px;top:309.6px;font-size:7.2px;line-height:7.2px;color:#606060;">4</span>
<span class="t s" style="left:218px;top:309.6px;font-size:7.2px;line-height:7.2px;color:#c8c8c8;transform:scaleX(0.968);">Offline</span>
<span class="t s" style="left:268px;top:309.6px;font-size:7.2px;line-height:7.2px;color:#444;transform:scaleX(0.913);">Ed Barry 1</span>
<span class="t s" style="left:369px;top:309.6px;font-size:7.2px;line-height:7.2px;color:#606060;transform:scaleX(0.856);">CHYE7001</span>
<span class="t s" style="left:469.8px;top:309.6px;font-size:7.2px;line-height:7.2px;color:#606060;">0</span>
<span class="t s" style="left:520.3px;top:309.6px;font-size:7.2px;line-height:7.2px;color:#606060;">2</span>
<span class="t s" style="left:550.5px;top:309.6px;font-size:7.2px;line-height:7.2px;color:#606060;transform:scaleX(0.952);">2022-05-16</span>
<span class="t s" style="left:601px;top:309.6px;font-size:7.2px;line-height:7.2px;color:#606060;">1</span>
<span class="t s" style="left:641.5px;top:309.6px;font-size:7.2px;line-height:7.2px;color:#606060;transform:scaleX(0.930);">20kWp</span>
<span class="t s" style="left:691.5px;top:309.6px;font-size:7.2px;line-height:7.2px;color:#606060;transform:scaleX(0.952);">0kWh</span>
<span class="t s" style="left:742px;top:309.6px;font-size:7.2px;line-height:7.2px;color:#606060;">0</span>
<span class="t s" style="left:792.5px;top:309.6px;font-size:7.2px;line-height:7.2px;color:#606060;transform:scaleX(0.949);">11128.4kWh</span>
<span class="t s" style="left:123px;top:334.85px;font-size:7.3px;line-height:7.3px;color:#b4b4b4;transform:scaleX(0.962);">Specify plant grouping</span>
<span class="t s" style="left:211.8px;top:334.85px;font-size:7.3px;line-height:7.3px;color:#b4b4b4;transform:scaleX(0.941);">Set time zone</span>
<span class="t s" style="left:273px;top:334.85px;font-size:7.3px;line-height:7.3px;color:#b4b4b4;transform:scaleX(0.971);">Set the low limit of generation</span>
<span class="t s" style="left:385.5px;top:334.85px;font-size:7.3px;line-height:7.3px;color:#b4b4b4;transform:scaleX(0.903);">create_single_page</span>
<span class="t s" style="left:462.8px;top:333.65px;font-size:7.3px;line-height:7.3px;color:#333;transform:scaleX(0.996);">Import to distributor / installer</span>
<span class="t s" style="left:581px;top:334.95px;font-size:7.3px;line-height:7.3px;color:#444;transform:scaleX(0.915);">Export</span>
<span class="t s" style="left:824.2px;top:334px;font-size:7.2px;line-height:7.2px;color:#555;transform:scaleX(0.922);">Previous</span>
<span class="t s" style="left:867.2px;top:334px;font-size:7.2px;line-height:7.2px;color:#fff;">1</span>
<span class="t s" style="left:886.9px;top:334px;font-size:7.2px;line-height:7.2px;color:#444;transform:scaleX(0.974);">Next</span>
<span class="t s" style="left:915px;top:334px;font-size:7.2px;line-height:7.2px;color:#555;transform:scaleX(0.856);">To</span>
<span class="t s" style="left:936.8px;top:334px;font-size:7.2px;line-height:7.2px;color:#444;">1</span>
<span class="t s" style="left:954.3px;top:334.2px;font-size:7.2px;line-height:7.2px;color:#555;transform:scaleX(0.919);">page</span>
<span class="t s" style="left:980.6px;top:334px;font-size:7.2px;line-height:7.2px;color:#444;transform:scaleX(0.969);">Confirm</span>
</div></body></html>
